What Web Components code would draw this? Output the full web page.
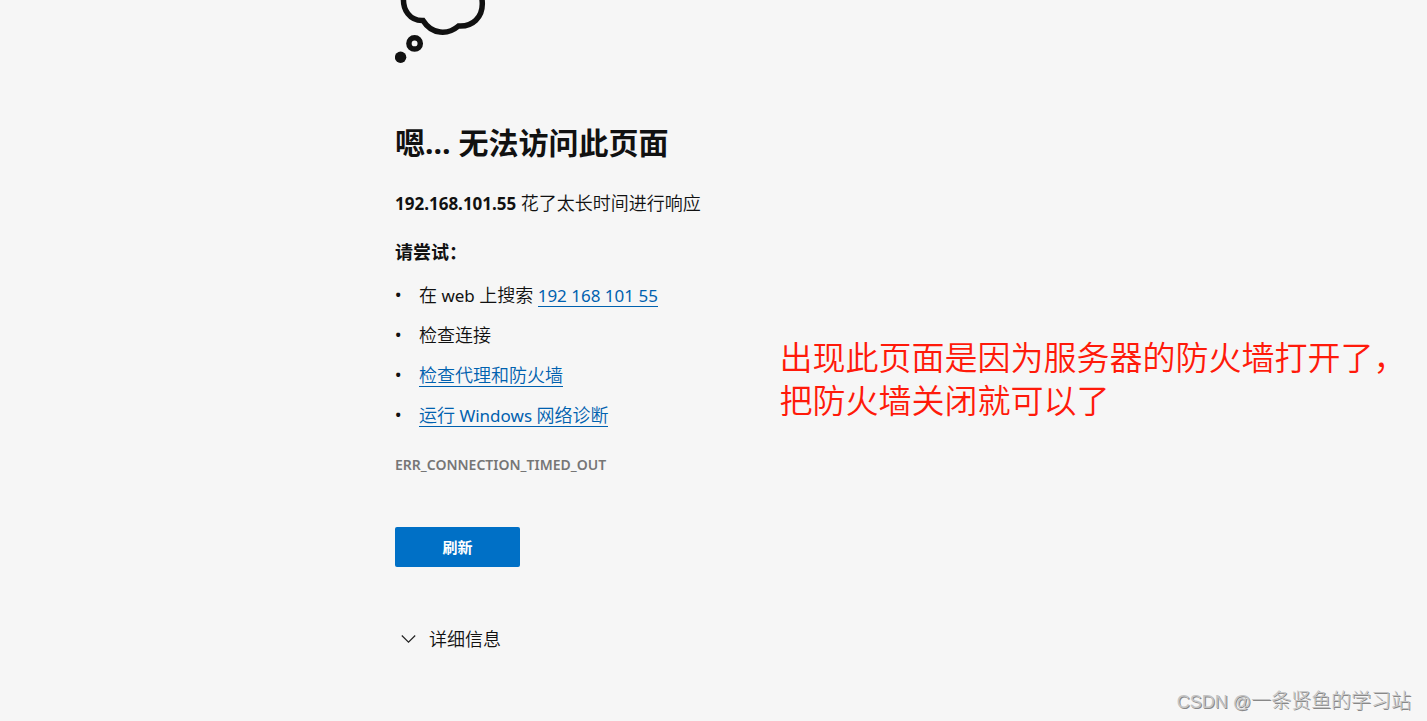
<!DOCTYPE html>
<html lang="zh-CN">
<head>
<meta charset="utf-8">
<meta name="viewport" content="width=device-width, initial-scale=1">
<title>192.168.101.55</title>
<style>
html { background: #f6f6f6; }
body {
  margin: 0; position: relative; min-height: 100vh; overflow-x: hidden;
  color: #111; font-family: "Noto Sans", "Noto Sans CJK SC", sans-serif; font-size: 18px; line-height: 24px;
}
</style>
</head>
<body>
<error-page>
  <thought-cloud slot="art"></thought-cloud>
  <span slot="title">嗯… 无法访问此页面</span>
  <suggestion-list slot="tips"></suggestion-list>
</error-page>
<red-note>出现此页面是因为服务器的防火墙打开了，<br>把防火墙关闭就可以了</red-note>
<water-mark><span slot="site">CSDN @</span>一条贤鱼的学习站</water-mark>
<script>
function define(name, html) {
  customElements.define(name, class extends HTMLElement {
    constructor() {
      super();
      this.attachShadow({ mode: "open" }).innerHTML = html;
    }
  });
}

define("thought-cloud", `
<style>
:host { display: block; height: 64px; }
svg { display: block; }
</style>
<svg width="96" height="64" viewBox="0 0 96 64" fill="none" stroke="#111" stroke-width="5.5" aria-hidden="true">
  <path d="M8.700 -4C7 10 15 21 28 20.500C37 35 53 35 63.500 26C78 27 87.300 17 87.300 4C87.300 0 87 -2 86 -5"/>
  <circle cx="19.600" cy="43.400" r="5.700"/>
  <circle cx="5.600" cy="57.300" r="5.700" fill="#111" stroke="none"/>
</svg>`);

define("text-link", `
<style>
:host { display: inline; }
a { color: #0061af; text-decoration: none; border-bottom: 1px solid #0061af; display: inline-block; line-height: 21px; }
</style>
<a href="#"><slot></slot></a>`);

define("suggestion-list", `
<style>
:host { display: block; font-weight: 350; }
ul { list-style: none; margin: 0; padding: 0; display: grid; gap: 16px; }
li { display: grid; grid-template-columns: 24px 1fr; height: 24px; }
li::before { content: "•"; font-size: 17px; font-weight: 500; }
.latin { font-size: 17px; font-weight: 370; }
</style>
<ul>
  <li><div>在<span class="latin"> web </span>上搜索<span class="latin"> <text-link>192 168 101 55</text-link></span></div></li>
  <li><div>检查连接</div></li>
  <li><div><text-link>检查代理和防火墙</text-link></div></li>
  <li><div><text-link>运行<span class="latin"> Windows </span>网络诊断</text-link></div></li>
</ul>`);

define("refresh-button", `
<style>
:host { display: block; }
button {
  width: 125px; height: 40px; padding: 0; border: 0; border-radius: 2px;
  background: #0070c6; color: #fff; font: inherit; font-size: 15px; font-weight: 700; cursor: pointer;
}
</style>
<button type="button"><slot></slot></button>`);

define("details-toggle", `
<style>
:host { display: block; font-weight: 350; }
button {
  display: flex; align-items: center; gap: 13px; padding: 0 6px; border: 0;
  background: none; color: inherit; font: inherit; cursor: pointer;
}
</style>
<button type="button" aria-expanded="false">
  <svg width="15" height="10" viewBox="0 0 15 10" fill="none" stroke="#222" stroke-width="1.200" aria-hidden="true"><path d="M.8 1.500L7.500 8.200L14.200 1.500"/></svg>
  <slot></slot>
</button>`);

define("error-page", `
<style>
:host { display: block; }
main { max-width: 637px; margin: 0 auto; }
h1 { margin: 59px 0 0; font-size: 30px; line-height: 40px; font-weight: 700; }
.reason { margin: 28px 0 0; font-weight: 350; }
.reason strong { font-size: 17px; font-weight: 700; }
h2 { margin: 24px 0 19px; font-size: 18px; line-height: 24px; font-weight: 700; }
.code { margin: 28px 0 52px; font-size: 14px; line-height: 20px; font-weight: 600; color: #767676; }
details-toggle { margin-top: 60px; }
</style>
<main>
  <slot name="art"></slot>
  <h1><slot name="title"></slot></h1>
  <p class="reason"><strong>192.168.101.55 </strong>花了太长时间进行响应</p>
  <h2>请尝试：</h2>
  <slot name="tips"></slot>
  <p class="code">ERR_CONNECTION_TIMED_OUT</p>
  <refresh-button>刷新</refresh-button>
  <details-toggle>详细信息</details-toggle>
</main>`);

define("red-note", `
<style>
:host {
  display: block; position: absolute; top: 337px; left: calc(50% + 66px); white-space: nowrap;
  color: #ff1a0a; font-family: "Liberation Sans", "Noto Sans CJK SC", sans-serif; font-size: 33px; line-height: 43px; font-weight: 350;
}
</style>
<slot></slot>`);

define("water-mark", `
<style>
:host {
  display: block; position: absolute; right: 16px; bottom: 7px; white-space: nowrap;
  color: #c4c4c4; text-shadow: 1px 1px 0 #888;
  font-family: "Liberation Sans", "Noto Sans CJK SC", sans-serif; font-size: 20px; line-height: 24px; font-weight: 300;
}
.site { font-size: 18px; }
</style>
<span class="site"><slot name="site"></slot></span><slot></slot>`);
</script>
</body>
</html>
